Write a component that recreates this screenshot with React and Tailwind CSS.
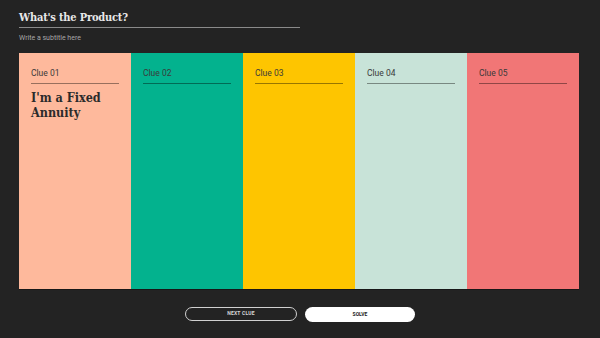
const CLUES = [
  { label: 'Clue 01', bg: 'bg-[#feb99c]', text: "I'm a Fixed Annuity" },
  { label: 'Clue 02', bg: 'bg-[#03b28e]' },
  { label: 'Clue 03', bg: 'bg-[#fec500]' },
  { label: 'Clue 04', bg: 'bg-[#c8e3d8]' },
  { label: 'Clue 05', bg: 'bg-[#f17676]' },
]

function CluePanel({ clue }) {
  return (
    <div className={`${clue.bg} px-3 pt-[15px]`}>
      <div className="text-[8.5px] leading-[10px] text-[#3a3a3a] font-['Roboto',sans-serif] pb-[5px] border-b border-[#00000066]">
        {clue.label}
      </div>
      {clue.text && (
        <p className="mt-[6px] w-[80px] text-[12.5px] leading-[15px] font-bold text-[#2b2b2b] font-['DejaVu_Serif_Condensed','DejaVu_Serif',serif]">
          {clue.text}
        </p>
      )}
    </div>
  )
}

export default function App() {
  return (
    <div className="w-[600px] h-[338px] bg-[#232323] overflow-hidden font-['Roboto',sans-serif]">
      {/* Header */}
      <div className="pl-[19px] pt-[11px]">
        <h1 className="w-[281px] text-[11px] leading-[14px] font-bold text-[#e8e8e8] font-['DejaVu_Serif_Condensed','DejaVu_Serif',serif] tracking-[-0.2px] pb-[2px] border-b border-[#8a8a8a]">
          What's the Product?
        </h1>
        <p className="mt-[6px] text-[7px] leading-[8px] text-[#a8a8a8]">Write a subtitle here</p>
      </div>

      {/* Clues */}
      <div className="ml-[19px] w-[560px] mt-[11px] h-[236px] grid grid-cols-5 shadow-[0_1px_0_#00000055]">
        {CLUES.map((clue) => (
          <CluePanel key={clue.label} clue={clue} />
        ))}
      </div>

      {/* Actions */}
      <div className="mt-[18px] flex justify-center gap-[8px]">
        <button className="w-[112px] h-[14px] rounded-full border border-[#d0d0d0] text-[5px] font-bold uppercase text-[#d8d8d8] tracking-[0.2px]">
          Next Clue
        </button>
        <button className="w-[110px] h-[15px] rounded-full bg-white text-[5px] font-bold uppercase text-[#222]">
          Solve
        </button>
      </div>
    </div>
  )
}
